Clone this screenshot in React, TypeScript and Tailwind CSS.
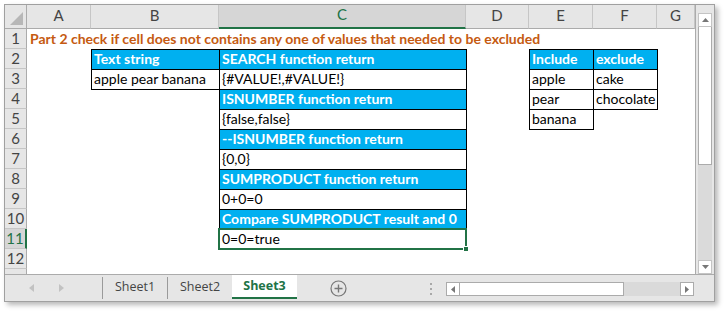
import React from 'react';

type Cell = { text: string; head?: boolean };

// column letters, in the order they sit on the sheet
const columns = ['A', 'B', 'C', 'D', 'E', 'F', 'G'];

const cells: Record<string, Cell> = {
  B2: { text: 'Text string', head: true },
  B3: { text: 'apple pear banana' },
  C2: { text: 'SEARCH function return', head: true },
  C3: { text: '{#VALUE!,#VALUE!}' },
  C4: { text: 'ISNUMBER function return', head: true },
  C5: { text: '{false,false}' },
  C6: { text: '--ISNUMBER function return', head: true },
  C7: { text: '{0,0}' },
  C8: { text: 'SUMPRODUCT function return', head: true },
  C9: { text: '0+0=0' },
  C10: { text: 'Compare SUMPRODUCT result and 0', head: true },
  C11: { text: '0=0=true' },
  E2: { text: 'Include', head: true },
  F2: { text: 'exclude', head: true },
  E3: { text: 'apple' },
  F3: { text: 'cake' },
  E4: { text: 'pear' },
  F4: { text: 'chocolate' },
  E5: { text: 'banana' },
};

const rows = Array.from({ length: 12 }, (_, i) => i + 1);

function SheetCell({ col, row }: { col: string; row: number }) {
  const cell = cells[`${col}${row}`];
  const selected = col === 'C' && row === 11;

  return (
    <div
      className={`relative flex items-end pl-[3px] pb-[1px] leading-[18px] whitespace-nowrap ${
        cell?.head ? 'bg-[#00b0f0] text-white font-bold' : 'bg-white text-black'
      }`}
    >
      {row === 1 && col === 'A' && (
        <span className="relative z-10 font-bold text-[#c55a11]">
          Part 2 check if cell does not contains any one of values that needed to be excluded
        </span>
      )}
      {cell && <span>{cell.text}</span>}
      {cell && (
        <div className="pointer-events-none absolute top-0 left-0 -right-px -bottom-px z-[5] border border-black" />
      )}
      {selected && (
        <>
          <div className="pointer-events-none absolute -top-px -left-px -right-px -bottom-px z-20 border-2 border-[#217346]" />
          <div className="absolute -right-[3px] -bottom-[3px] z-30 h-[6px] w-[6px] border border-white bg-[#217346]" />
        </>
      )}
    </div>
  );
}

function Sheet() {
  return (
    <div className="grid grid-cols-[22px_64px_128px_247px_63px_64px_64px_38px] grid-rows-[24px_repeat(12,20px)_5px] overflow-hidden text-[14px] font-['Lato',sans-serif]">
      {/* corner */}
      <div className="relative bg-[#e6e6e6] border-r border-b border-[#ababab]">
        <svg className="absolute right-[3px] bottom-[3px]" width="13" height="13" viewBox="0 0 13 13">
          <polygon points="13,0 13,13 0,13" fill="#b7b7b7" />
        </svg>
      </div>
      {columns.map((c) => (
        <div
          key={c}
          className={`flex items-end justify-center pb-[2px] text-[15px] ${
            c === 'C'
              ? 'bg-[#d6d6d6] text-[#217346] border-b-2 border-b-[#217346] border-r border-r-[#c6c6c6]'
              : 'bg-[#e6e6e6] text-[#444] border-b border-b-[#ababab] border-r border-r-[#c6c6c6]'
          }`}
        >
          {c}
        </div>
      ))}

      {rows.map((r) => (
        <React.Fragment key={r}>
          <div
            className={`flex items-end justify-center pb-[1px] leading-[18px] text-[15px] border-b border-b-[#c6c6c6] ${
              r === 11
                ? 'bg-[#d6d6d6] text-[#217346] border-r-2 border-r-[#217346]'
                : 'bg-[#e6e6e6] text-[#444] border-r border-r-[#ababab]'
            }`}
          >
            {r}
          </div>
          {columns.map((c) => (
            <SheetCell key={c} col={c} row={r} />
          ))}
        </React.Fragment>
      ))}

      {/* partly visible row 13 */}
      <div className="bg-[#e6e6e6] border-r border-[#ababab]" />
      <div className="col-span-7 bg-white" />
    </div>
  );
}

function VerticalScroll() {
  return (
    <div className="flex w-[19px] flex-col border-l border-[#ababab] bg-[#e6e6e6] pt-[8px] pl-[2px]">
      <div className="flex h-[14px] w-[14px] items-center justify-center border border-[#c4c4c4] bg-white">
        <svg width="7" height="4" viewBox="0 0 7 4">
          <polygon points="3.5,0 7,4 0,4" fill="#777" />
        </svg>
      </div>
      <div className="h-[138px] w-[14px] border border-t-0 border-[#ababab] bg-white" />
      <div className="w-[14px] flex-1 bg-[#dadada]" />
      <div className="flex h-[14px] w-[14px] items-center justify-center border border-[#c4c4c4] bg-white">
        <svg width="7" height="4" viewBox="0 0 7 4">
          <polygon points="0,0 7,0 3.5,4" fill="#777" />
        </svg>
      </div>
    </div>
  );
}

function TabBar() {
  return (
    <div className="flex h-[27px] items-start border-t border-[#ababab] bg-[#e6e6e6] text-[12.5px] font-['Open_Sans',sans-serif]">
      {/* sheet navigation arrows */}
      <div className="flex h-[26px] w-[97px] items-center gap-[25px] pl-[24px]">
        <svg width="5" height="8" viewBox="0 0 5 8">
          <polygon points="5,0 5,8 0,4" fill="#c2c2c2" />
        </svg>
        <svg width="5" height="8" viewBox="0 0 5 8">
          <polygon points="0,0 5,4 0,8" fill="#c2c2c2" />
        </svg>
      </div>
      <div className="mt-[2px] h-[22px] w-px bg-[#9a9a9a]" />
      <div className="flex h-[24px] w-[64px] items-center justify-center text-[#444]">Sheet1</div>
      <div className="mt-[2px] h-[22px] w-px bg-[#9a9a9a]" />
      <div className="flex h-[24px] w-[64px] items-center justify-center text-[#444]">Sheet2</div>
      <div className="flex h-[24px] w-[65px] items-center justify-center border-b-2 border-[#217346] bg-white font-bold text-[#217346]">
        Sheet3
      </div>
      <div className="flex h-[26px] w-[82px] items-center justify-center">
        <svg width="17" height="17" viewBox="0 0 17 17">
          <circle cx="8.5" cy="8.5" r="7.5" fill="none" stroke="#777" strokeWidth="1.2" />
          <path d="M8.5 4.5v8M4.5 8.5h8" stroke="#777" strokeWidth="1.4" />
        </svg>
      </div>
      {/* split handle */}
      <div className="ml-[51px] mt-[8px] flex flex-col gap-[3px]">
        <div className="h-[2px] w-[2px] bg-[#a8a8a8]" />
        <div className="h-[2px] w-[2px] bg-[#a8a8a8]" />
        <div className="h-[2px] w-[2px] bg-[#a8a8a8]" />
      </div>
      {/* horizontal scrollbar */}
      <div className="ml-[14px] mt-[7px] flex h-[14px] w-[248px]">
        <div className="flex h-[14px] w-[14px] items-center justify-center border border-[#ababab] bg-white">
          <svg width="4" height="7" viewBox="0 0 4 7">
            <polygon points="4,0 4,7 0,3.5" fill="#777" />
          </svg>
        </div>
        <div className="h-[14px] w-[164px] border border-l-0 border-[#ababab] bg-white" />
        <div className="h-[14px] flex-1 bg-[#dadada]" />
        <div className="flex h-[14px] w-[14px] items-center justify-center border border-[#ababab] bg-white">
          <svg width="4" height="7" viewBox="0 0 4 7">
            <polygon points="0,0 4,3.5 0,7" fill="#777" />
          </svg>
        </div>
      </div>
    </div>
  );
}

export default function App() {
  return (
    <div className="h-[311px] w-[726px] bg-white pt-[4px] pl-[4px]">
      <div className="flex w-[711px] flex-col border border-[#a0a0a0] shadow-[3px_3px_5px_rgba(0,0,0,0.28)]">
        <div className="flex">
          <Sheet />
          <VerticalScroll />
        </div>
        <TabBar />
      </div>
    </div>
  );
}
